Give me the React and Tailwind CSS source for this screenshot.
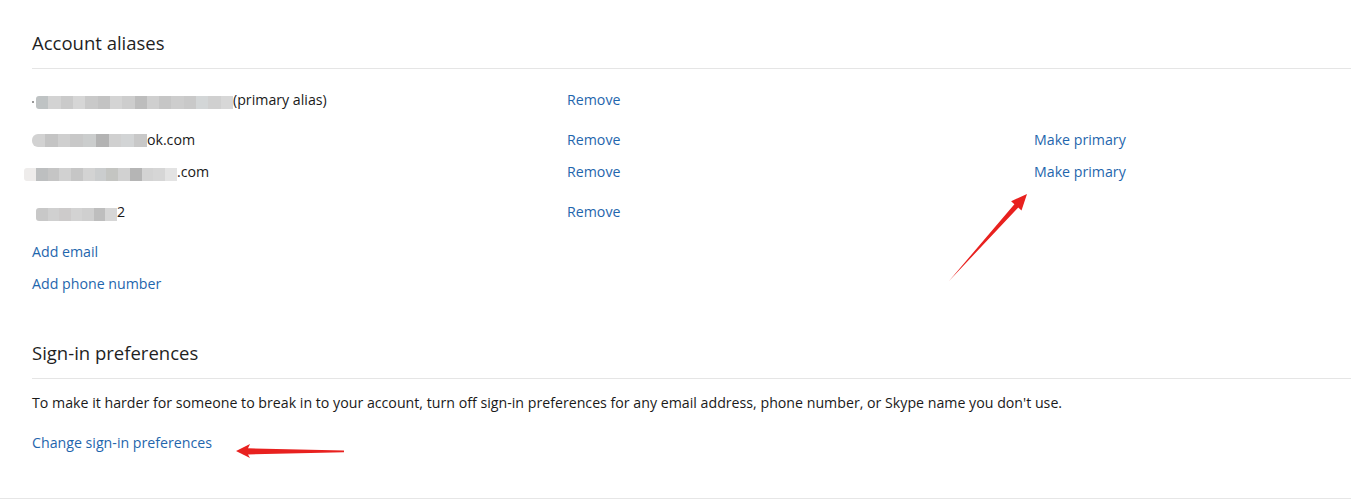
import React from "react";

const font = { fontFamily: '"Open Sans", "Liberation Sans", sans-serif' };

// blurred email mosaics: each row is a list of block colours
const MOSAICS = {
  primary: ["#bfc3c4", "#d3d3d3", "#cacaca", "#d6d6d6", "#c9c9c9", "#c3c3c3", "#d4d4d4", "#cdcdcd", "#bdbdbd", "#cfcfcf", "#c6c6c6", "#cdcdcd", "#c9c9c9", "#d3d6d7", "#d0d0d0", "#d7d7d7"],
  outlook: ["#d2d2d2", "#c4c4c4", "#cfcfcf", "#c8c8c8", "#cbcdcd", "#b3b3b3", "#d0d0d0", "#d2d4d5", "#c8c8c8"],
  other: ["#eeeceb", "#bdbfc0", "#c5c5c5", "#d1d1d1", "#c6c6c6", "#d3d3d3", "#cbcdce", "#c4c5c2", "#d1d1d1", "#b5b5b5", "#d3d3d3", "#d6d6d6", "#e3e3e3"],
  skype: ["#c8c8c8", "#d0d0d0", "#cdcbcb", "#d3d3d3", "#cfcfcf", "#bebebe", "#d6d6d6"],
};

function Mosaic({ colors, width, className = "" }) {
  const w = width / colors.length;
  return (
    <span className={`inline-flex h-[13px] overflow-hidden rounded-l-[3px] blur-[0.6px] ${className}`}>
      {colors.map((c, i) => (
        <span key={i} className="h-full" style={{ width: w, background: c }} />
      ))}
    </span>
  );
}

function Link({ children }) {
  return <a className="text-[#1f66ad] cursor-pointer hover:underline">{children}</a>;
}

function AliasRow({ label, remove = true, primary = false, className = "" }) {
  return (
    <div className={`grid grid-cols-[535px_467px_1fr] h-5 items-center leading-5 ${className}`}>
      <div className="flex items-center text-[#1a1a1a] whitespace-nowrap">{label}</div>
      <div>{remove && <Link>Remove</Link>}</div>
      <div>{primary && <Link>Make primary</Link>}</div>
    </div>
  );
}

function Heading({ children, className = "" }) {
  return (
    <div className={`border-b border-[#e5e5e5] pb-[11px] ${className}`}>
      <h2 className="text-[18.5px] leading-7 text-[#1f1f1f]">{children}</h2>
    </div>
  );
}

function Arrows() {
  return (
    <svg className="absolute inset-0 pointer-events-none" width="1351" height="500">
      <polygon
        fill="#e8211f"
        points="949,281 1014.4,204.2 1011.1,201.2 1027,194 1021.5,210.6 1018.2,207.6"
      />
      <polygon
        fill="#e8211f"
        points="236,451 250,444 248,448.3 344,450.4 344,452.2 248,454.5 250,458"
      />
    </svg>
  );
}

export default function App() {
  return (
    <div className="relative w-[1351px] h-[500px] bg-white text-[14.2px]" style={font}>
      <div className="border-b border-[#e6e6e6] h-[499px]">
        <div className="pl-8">
          {/* Account aliases */}
          <Heading className="pt-[29px]">Account aliases</Heading>

          <AliasRow
            className="mt-[21px]"
            label={
              <>
                <span className="w-[2px] h-[2px] bg-[#9a9a9a] mr-[2px] mt-1" />
                <Mosaic colors={MOSAICS.primary} width={197} className="mt-1" />
                <span>(primary alias)</span>
              </>
            }
          />
          <AliasRow
            className="mt-5"
            primary
            label={
              <>
                <Mosaic colors={MOSAICS.outlook} width={115} className="rounded-l-[6px]" />
                <span>ok.com</span>
              </>
            }
          />
          <AliasRow
            className="mt-3"
            primary
            label={
              <>
                <Mosaic colors={MOSAICS.other} width={153} className="-ml-2 mt-1" />
                <span>.com</span>
              </>
            }
          />
          <AliasRow
            className="mt-5"
            label={
              <>
                <span className="w-1" />
                <Mosaic colors={MOSAICS.skype} width={81} className="mt-1" />
                <span>2</span>
              </>
            }
          />

          <div className="mt-5 leading-5">
            <Link>Add email</Link>
          </div>
          <div className="mt-3 leading-5">
            <Link>Add phone number</Link>
          </div>

          {/* Sign-in preferences */}
          <Heading className="mt-[45px]">Sign-in preferences</Heading>
          <p className="mt-[14px] leading-5 text-[#1a1a1a]">
            To make it harder for someone to break in to your account, turn off sign-in preferences for any email
            address, phone number, or Skype name you don't use.
          </p>
          <div className="mt-5 leading-5">
            <Link>Change sign-in preferences</Link>
          </div>
        </div>
      </div>
      <Arrows />
    </div>
  );
}
